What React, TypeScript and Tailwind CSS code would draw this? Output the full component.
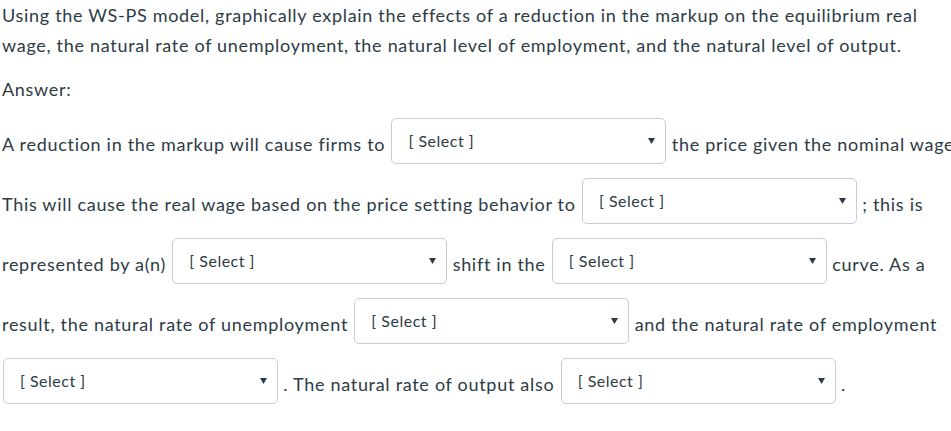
import type { ReactNode } from "react";

function Dropdown() {
  return (
    <span className="relative ml-[1px] inline-flex h-[46px] w-[275px] shrink-0 items-center rounded-[5px] border border-[#c7cdd1] bg-white pl-[16px] text-[16px] leading-[20px] tracking-[0.5px] text-[#2d3b45]">
      <span className="-mt-[1px]">[ Select ]</span>
      <svg
        className="absolute right-[10px] top-[19px]"
        width="7"
        height="6"
        viewBox="0 0 7 6"
        aria-hidden="true"
      >
        <path d="M0 0H7L3.5 6Z" fill="#2d3b45" />
      </svg>
    </span>
  );
}

function Row({ children }: { children: ReactNode }) {
  return (
    <div className="flex h-[60px] items-center whitespace-pre">{children}</div>
  );
}

function Txt({ children }: { children: ReactNode }) {
  return <span className="mt-[6px]">{children}</span>;
}

export default function App() {
  return (
    <div className="w-[951px] overflow-hidden bg-white">
      <div
        className="w-[968px] pl-[2px] text-[18px] leading-[30px] tracking-[0.7px] text-[#2d3b45]"
        style={{ fontFamily: "Lato, 'Noto Sans', sans-serif" }}
      >
        <p>
          Using the WS-PS model, graphically explain the effects of a reduction
          in the markup on the equilibrium real wage, the natural rate of
          unemployment, the natural level of employment, and the natural level
          of output.
        </p>
        <p className="mt-[14px]">Answer:</p>

        <div className="mt-[7px]">
          <Row>
            <Txt>A reduction in the markup will cause firms to </Txt>
            <Dropdown />
            <Txt> the price given the nominal wage.</Txt>
          </Row>
          <Row>
            <Txt>
              This will cause the real wage based on the price setting behavior
              to{" "}
            </Txt>
            <Dropdown />
            <Txt> ; this is</Txt>
          </Row>
          <Row>
            <Txt>represented by a(n) </Txt>
            <Dropdown />
            <Txt> shift in the </Txt>
            <Dropdown />
            <Txt> curve. As a</Txt>
          </Row>
          <Row>
            <Txt>result, the natural rate of unemployment </Txt>
            <Dropdown />
            <Txt> and the natural rate of employment</Txt>
          </Row>
          <Row>
            <Dropdown />
            <Txt> . The natural rate of output also </Txt>
            <Dropdown />
            <Txt> .</Txt>
          </Row>
        </div>
      </div>
    </div>
  );
}
